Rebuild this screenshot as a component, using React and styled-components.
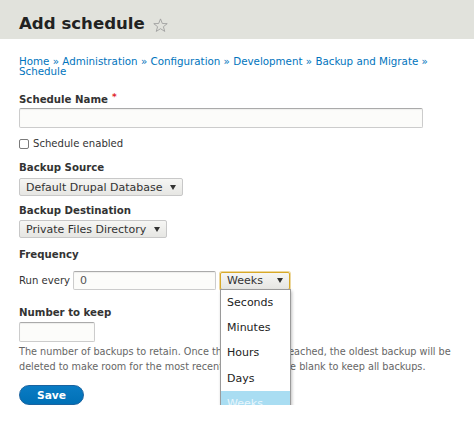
import React from "react";
import styled, { createGlobalStyle } from "styled-components";

const GlobalStyle = createGlobalStyle`
  html, body { margin: 0; padding: 0; background: #fff; }
  body {
    font-family: "DejaVu Sans", "Noto Sans", sans-serif;
    color: #333;
    font-size: 10.1px;
  }
  * { box-sizing: border-box; }
`;

const Header = styled.header`
  background: #e1e2dc;
  height: 39px;
  padding: 14px 19px 0;
`;

const Title = styled.h1`
  margin: 0;
  display: flex;
  align-items: center;
  font-size: 16.6px;
  line-height: 20px;
  font-weight: bold;
  color: #222;
`;

const StarIcon = styled.svg`
  margin-left: 8px;
  margin-top: 2px;
  width: 15px;
  height: 14px;
`;

const Main = styled.main`
  padding: 0 19px;
`;

const Breadcrumb = styled.nav`
  margin-top: 17px;
  font-size: 10.3px;
  line-height: 10px;
  color: #0074bd;
`;

const Crumb = styled.a`
  color: #0074bd;
  text-decoration: none;
`;

const Item = styled.div`
  margin-top: ${(p) => p.$mt}px;
  position: relative;
`;

const Label = styled.div`
  font-size: 10.2px;
  line-height: 13px;
  font-weight: bold;
  color: #333;
  margin-bottom: ${(p) => p.$mb ?? 3}px;
`;

const Required = styled.span`
  color: #e0262b;
  font-size: 9px;
  margin-left: 4px;
  vertical-align: 3px;
`;

const TextInput = styled.div`
  width: ${(p) => p.$w}px;
  height: ${(p) => p.$h ?? 20}px;
  border: 1px solid #ccc;
  border-top-color: #aaa;
  border-radius: 2px;
  background: #fcfcfa;
  box-shadow: inset 0 1px 1px rgba(0, 0, 0, 0.06);
  font-size: 11px;
  color: #555;
  padding-left: 6px;
  display: flex;
  align-items: center;
`;

const CheckRow = styled.label`
  display: flex;
  align-items: center;
  height: 13px;
  font-size: 10.1px;
  line-height: 13px;
  color: #333;
`;

const CheckBox = styled.span`
  width: 10px;
  height: 10px;
  border: 1px solid #7a7a7a;
  border-radius: 2px;
  background: #fff;
  margin-right: 4px;
  margin-top: 1px;
`;

const Select = styled.div`
  display: inline-flex;
  align-items: center;
  justify-content: space-between;
  width: ${(p) => (p.$w ? `${p.$w}px` : "auto")};
  height: ${(p) => p.$h ?? 18}px;
  padding: 0 6px 0 6px;
  border: 1px solid ${(p) => (p.$focus ? "#d8a928" : "#c8c8c8")};
  border-radius: 2px;
  background: linear-gradient(#f6f6f4, #e6e6e3);
  box-shadow: ${(p) => (p.$focus ? "0 0 0 1px rgba(216,169,40,0.45)" : "none")};
  font-size: 11px;
  color: #333;
  white-space: nowrap;
  position: relative;
`;

const Arrow = styled.svg`
  width: 6px;
  height: 5px;
  margin-left: 8px;
  flex: none;
`;

const Row = styled.div`
  display: flex;
  align-items: center;
  gap: 4px;
`;

const RowText = styled.span`
  font-size: 10.1px;
  color: #333;
  margin-right: -1px;
`;

const Menu = styled.ul`
  position: absolute;
  top: 100%;
  left: -1px;
  width: 71px;
  margin: 0;
  padding: 0;
  list-style: none;
  background: #fff;
  border: 1px solid #9a9a9a;
  box-shadow: 1px 2px 3px rgba(0, 0, 0, 0.25);
  z-index: 10;
`;

const Option = styled.li`
  height: 25.4px;
  line-height: 25.4px;
  padding-left: 6px;
  font-size: 11px;
  color: ${(p) => (p.$active ? "#eaf6fc" : "#222")};
  background: ${(p) => (p.$active ? "#a9ddf2" : "transparent")};
`;

const Description = styled.div`
  margin-top: 2px;
  font-size: 9.7px;
  line-height: 15px;
  color: #666;
`;

const SaveButton = styled.button`
  margin-top: 11px;
  width: 65px;
  height: 20px;
  border: 1px solid #1a63a0;
  border-radius: 10px;
  background: linear-gradient(#0a7cc4, #0070b6);
  color: #fff;
  font-family: "DejaVu Sans", sans-serif;
  font-weight: bold;
  font-size: 10.7px;
  padding: 0;
  cursor: pointer;
`;

const DownArrow = () => (
  <Arrow viewBox="0 0 6 5">
    <polygon points="0,0 6,0 3,5" fill="#333" />
  </Arrow>
);

const crumbs = ["Home", "Administration", "Configuration", "Development", "Backup and Migrate"];
const units = ["Seconds", "Minutes", "Hours", "Days", "Weeks"];

export default function App() {
  return (
    <>
      <GlobalStyle />
      <Header>
        <Title>
          Add schedule
          <StarIcon viewBox="0 0 24 23">
            <polygon
              points="12,1.5 15,9 23,9.3 16.8,14.3 19,22 12,17.6 5,22 7.2,14.3 1,9.3 9,9"
              fill="none"
              stroke="#9c9c9c"
              strokeWidth="1.4"
              strokeLinejoin="round"
            />
          </StarIcon>
        </Title>
      </Header>
      <Main>
        <Breadcrumb>
          {crumbs.map((c) => (
            <React.Fragment key={c}>
              <Crumb href="#">{c}</Crumb> »{" "}
            </React.Fragment>
          ))}
          <Crumb href="#">Schedule</Crumb>
        </Breadcrumb>

        <Item $mt={15}>
          <Label $mb={2}>
            Schedule Name<Required>*</Required>
          </Label>
          <TextInput $w={404} />
        </Item>

        <Item $mt={9}>
          <CheckRow>
            <CheckBox />
            Schedule enabled
          </CheckRow>
        </Item>

        <Item $mt={11}>
          <Label $mb={4}>Backup Source</Label>
          <Select>
            Default Drupal Database
            <DownArrow />
          </Select>
        </Item>

        <Item $mt={8}>
          <Label $mb={3}>Backup Destination</Label>
          <Select>
            Private Files Directory
            <DownArrow />
          </Select>
        </Item>

        <Item $mt={10}>
          <Label $mb={10}>Frequency</Label>
          <Row>
            <RowText>Run every</RowText>
            <TextInput $w={143} $h={19}>0</TextInput>
            <Select $w={70} $h={18} $focus>
              Weeks
              <DownArrow />
              <Menu>
                {units.map((u) => (
                  <Option key={u} $active={u === "Weeks"}>
                    {u}
                  </Option>
                ))}
              </Menu>
            </Select>
          </Row>
        </Item>

        <Item $mt={16}>
          <Label $mb={3}>Number to keep</Label>
          <TextInput $w={76} $h={20} />
          <Description>
            The number of backups to retain. Once this number is reached, the oldest backup will be
            deleted to make room for the most recent backup. Leave blank to keep all backups.
          </Description>
        </Item>

        <SaveButton>Save</SaveButton>
      </Main>
    </>
  );
}
